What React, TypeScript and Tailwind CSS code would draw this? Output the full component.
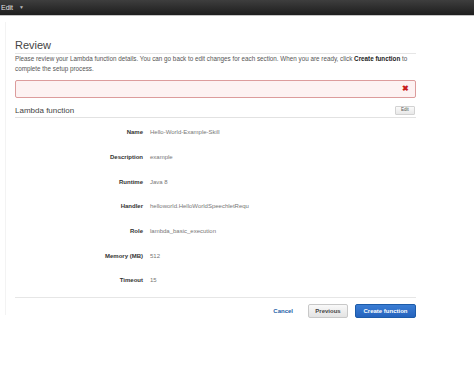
const rows: [string, string][] = [
  ["Name", "Hello-World-Example-Skill"],
  ["Description", "example"],
  ["Runtime", "Java 8"],
  ["Handler", "helloworld.HelloWorldSpeechletRequ"],
  ["Role", "lambda_basic_execution"],
  ["Memory (MB)", "512"],
  ["Timeout", "15"],
];

export default function App() {
  return (
    <div
      className="h-[389px] w-[474px] overflow-hidden bg-white"
      style={{ fontFamily: '"Liberation Sans", Arial, sans-serif' }}
    >
      {/* top bar */}
      <div className="flex h-[16px] items-center border-b border-[#c4c4c4] bg-gradient-to-b from-[#3e3e3e] to-[#1e1e1e] pl-[1px]">
        <span className="text-[7px] leading-none text-[#e4e4e4]">Edit</span>
        <span className="ml-[6px] text-[5px] leading-none text-[#bbb]">▼</span>
      </div>

      <div className="flex">
        <div className="mt-[6px] h-[293px] w-[6px] border-r border-[#f3f3f3]" />

        <div className="ml-[9px] w-[401px]">
          {/* title */}
          <div className="mt-[23px] border-b border-[#e6e6e6] pb-[1px]">
            <h1 className="text-[11px] leading-[13px] text-[#444]">Review</h1>
          </div>
          <p className="text-[6.3px] leading-[10px] text-[#555]">
            Please review your Lambda function details. You can go back to edit changes for each
            section. When you are ready, click <b className="text-[#222]">Create function</b> to
            <br />
            complete the setup process.
          </p>

          {/* error */}
          <div className="mt-[6px] flex h-[18px] items-center justify-end rounded-[2px] border border-[#dc9c9c] bg-[#fdf2f2] pr-[6px]">
            <span className="text-[8px] font-bold leading-none text-[#c81d1d]">✖</span>
          </div>

          {/* section header */}
          <div className="mt-[7px] flex h-[13px] items-center justify-between border-b border-[#e2e2e2] pb-[1px]">
            <h2 className="text-[8px] font-normal leading-none text-[#444]">Lambda function</h2>
            <button className="mr-[1px] flex h-[9px] w-[20px] items-center justify-center rounded-[1px] border border-[#d2d2d2] bg-gradient-to-b from-[#fafafa] to-[#e8e8e8] text-[4.5px] leading-none text-[#555]">
              Edit
            </button>
          </div>

          {/* details */}
          <div className="border-b border-[#e6e6e6] pb-[4px] pt-[2px]">
            {rows.map(([label, value]) => (
              <div key={label} className="flex h-[24.67px] items-center">
                <span className="w-[128px] text-right text-[6px] font-bold leading-none text-[#333]">
                  {label}
                </span>
                <span className="ml-[7px] text-[6px] leading-none text-[#777]">{value}</span>
              </div>
            ))}
          </div>

          {/* actions */}
          <div className="flex items-center justify-end pt-[6px]">
            <button className="mr-[15px] text-[6px] font-bold leading-none text-[#2663a8]">
              Cancel
            </button>
            <button className="flex h-[14px] w-[40px] items-center justify-center rounded-[2px] border border-[#c8c8c8] bg-gradient-to-b from-[#f9f9f9] to-[#e3e3e3] text-[6px] font-bold leading-none text-[#444]">
              Previous
            </button>
            <button className="ml-[7px] flex h-[14px] w-[61px] items-center justify-center rounded-[2px] border border-[#1d5ba8] bg-gradient-to-b from-[#3a7dd4] to-[#2563bd] text-[6px] font-bold leading-none text-white">
              Create function
            </button>
          </div>
        </div>
      </div>
    </div>
  );
}
